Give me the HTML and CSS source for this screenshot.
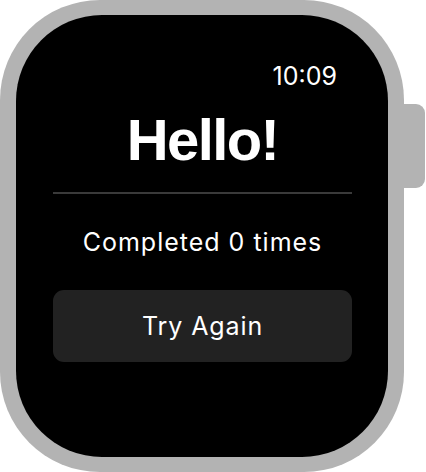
FILE: index.html
```html
<!DOCTYPE html>
<html>
<head>
<meta charset="utf-8">
<link rel="stylesheet" href="styles.css">
</head>
<body>
<div class="device">
  <div class="case">
    <div class="screen">
      <div class="time">10:09</div>
      <h1 class="title">Hello!</h1>
      <div class="divider"></div>
      <p class="count">Completed 0 times</p>
      <button class="btn">Try Again</button>
    </div>
  </div>
  <div class="crown"></div>
</div>
</body>
</html>
```
FILE: styles.css
```css
html, body {
  margin: 0;
  padding: 0;
  background: #ffffff;
}
.device {
  display: flex;
  align-items: flex-start;
  width: 426px;
  height: 472px;
}
.case {
  width: 404px;
  height: 472px;
  box-sizing: border-box;
  padding: 15px 16px;
  background: #b3b3b3;
  border-radius: 100px;
}
.crown {
  width: 21px;
  height: 84px;
  margin-top: 104px;
  background: #b3b3b3;
  border-radius: 0 9px 9px 0;
}
.screen {
  width: 372px;
  height: 442px;
  box-sizing: border-box;
  background: #000;
  border-radius: 86px;
  padding: 46px 36px 0 37px;
  display: flex;
  flex-direction: column;
  color: #fff;
  font-family: "Inter", "Liberation Sans", sans-serif;
}
.time {
  align-self: flex-end;
  margin-right: 15px;
  font-size: 25px;
  line-height: 30px;
  height: 30px;
  font-weight: 400;
}
.title {
  margin: 19px 0 0;
  text-align: center;
  font-family: "Liberation Sans", Arial, sans-serif;
  font-weight: 700;
  font-size: 58px;
  line-height: 60px;
  letter-spacing: -1.6px;
}
.divider {
  margin-top: 22px;
  height: 2px;
  background: #3a3a3a;
}
.count {
  margin: 33px 0 0;
  text-align: center;
  font-size: 25px;
  line-height: 30px;
  letter-spacing: 1px;
}
.btn {
  margin-top: 33px;
  height: 72px;
  border: 0;
  border-radius: 11px;
  background: #222222;
  color: #fff;
  font-family: "Inter", "Liberation Sans", sans-serif;
  font-size: 25px;
  letter-spacing: 0.9px;
  padding: 0;
}
```
